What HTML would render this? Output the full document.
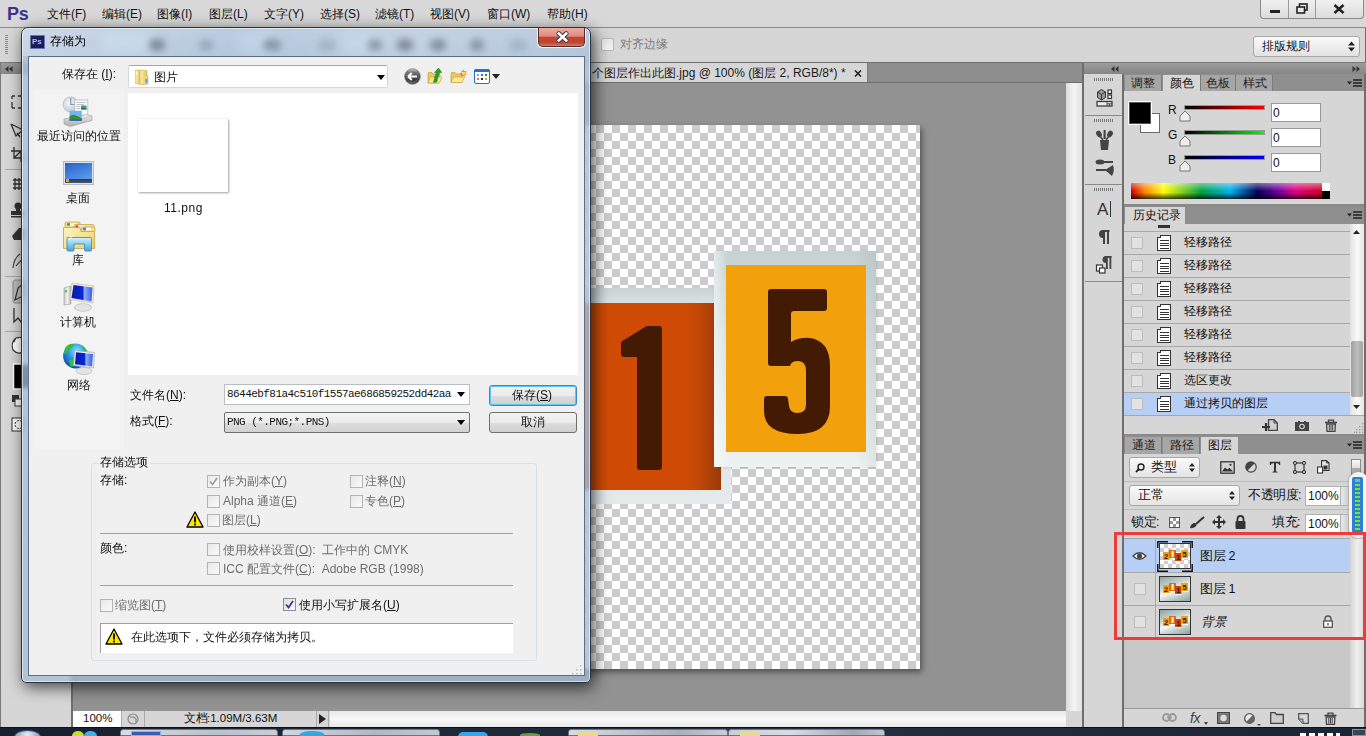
<!DOCTYPE html>
<html><head><meta charset="utf-8">
<style>
*{margin:0;padding:0;box-sizing:border-box}
html,body{width:1366px;height:736px;overflow:hidden}
body{position:relative;background:#d6d6d6;font-family:"Liberation Sans",sans-serif;font-size:12px;color:#111}
.a{position:absolute}
.t{position:absolute;white-space:nowrap;line-height:1}
.c{display:inline-block;width:1em;text-align:center}
</style></head><body>

<!-- MENU BAR -->
<div class="a" style="left:0;top:0;width:1366px;height:28px;background:#d8d8d8"></div>
<div class="t" style="left:7px;top:5px;font-size:18px;font-weight:bold;color:#3a3290;letter-spacing:-0.3px">Ps</div>
<div class="t" style="left:47px;top:8px;font-size:12px"><span class="c">文</span><span class="c">件</span>(F)</div>
<div class="t" style="left:102px;top:8px;font-size:12px"><span class="c">编</span><span class="c">辑</span>(E)</div>
<div class="t" style="left:157px;top:8px;font-size:12px"><span class="c">图</span><span class="c">像</span>(I)</div>
<div class="t" style="left:209px;top:8px;font-size:12px"><span class="c">图</span><span class="c">层</span>(L)</div>
<div class="t" style="left:264px;top:8px;font-size:12px"><span class="c">文</span><span class="c">字</span>(Y)</div>
<div class="t" style="left:320px;top:8px;font-size:12px"><span class="c">选</span><span class="c">择</span>(S)</div>
<div class="t" style="left:375px;top:8px;font-size:12px"><span class="c">滤</span><span class="c">镜</span>(T)</div>
<div class="t" style="left:430px;top:8px;font-size:12px"><span class="c">视</span><span class="c">图</span>(V)</div>
<div class="t" style="left:487px;top:8px;font-size:12px"><span class="c">窗</span><span class="c">口</span>(W)</div>
<div class="t" style="left:547px;top:8px;font-size:12px"><span class="c">帮</span><span class="c">助</span>(H)</div>

<!-- OPTIONS BAR -->
<div class="a" style="left:0;top:27px;width:1366px;height:1px;background:#8a8a8a"></div>
<div class="a" style="left:0;top:28px;width:1366px;height:34px;background:#d6d6d6"></div>
<div class="a" style="left:0;top:62px;width:1366px;height:1px;background:#7a7a7a"></div>
<div class="a" style="left:1365px;top:28px;width:1px;height:699px;background:#6e6e6e"></div>

<!-- DOC TAB BAR + CANVAS AREA -->
<div class="a" style="left:73px;top:63px;width:1009px;height:19px;background:#8e8e8e"></div>
<div class="a" style="left:73px;top:82px;width:993px;height:629px;background:#929292"></div>

<!-- STATUS BAR -->
<div class="a" style="left:73px;top:711px;width:1009px;height:16px;background:#d6d6d6"></div>

<!-- TOOLBAR LEFT -->
<div class="a" style="left:0;top:63px;width:71px;height:664px;background:#d6d6d6"></div>
<div class="a" style="left:71px;top:63px;width:2px;height:664px;background:#6e6e6e"></div>

<!-- RIGHT: separators and icon column -->
<div class="a" style="left:1082px;top:63px;width:2px;height:664px;background:#6e6e6e"></div>
<div class="a" style="left:1084px;top:63px;width:282px;height:11px;background:#8f8f8f"></div>
<div class="a" style="left:1084px;top:74px;width:38px;height:653px;background:#d6d6d6"></div>
<div class="a" style="left:1122px;top:74px;width:2px;height:653px;background:#6e6e6e"></div>
<div class="a" style="left:1124px;top:74px;width:242px;height:653px;background:#d6d6d6"></div>

<!-- TASKBAR -->
<div class="a" style="left:0;top:727px;width:1366px;height:9px;background:linear-gradient(90deg,#172030,#1f2a3a 40%,#243040 60%,#1a2434)"></div>
<div class="a" style="left:0;top:727px;width:1366px;height:1px;background:#0c1018"></div>
<div class="a" style="left:14px;top:730px;width:27px;height:14px;border-radius:50%;background:radial-gradient(ellipse at 50% 30%,#e8eef4,#8aa0b8 70%);border:1px solid #3a5a8a"></div>
<div class="a" style="left:72px;top:731px;width:12px;height:10px;border-radius:50%;background:#c8e020"></div>
<div class="a" style="left:84px;top:731px;width:13px;height:10px;border-radius:50%;background:#40b0f0"></div>
<div class="a" style="left:120px;top:729px;width:158px;height:7px;border-radius:3px 3px 0 0;background:linear-gradient(90deg,#d8dce2,#b8c0ca 60%,#c8ced6);border:1px solid #6a7688"></div>
<div class="a" style="left:131px;top:731px;width:30px;height:5px;background:#3a5ab8;border:1px solid #8ab0f0"></div>
<div class="a" style="left:282px;top:729px;width:158px;height:7px;border-radius:3px 3px 0 0;background:linear-gradient(90deg,#d0d6de,#b0b8c4 60%,#c0c8d2);border:1px solid #6a7688"></div>
<div class="a" style="left:300px;top:731px;width:24px;height:6px;border-radius:50% 50% 0 0;background:#30a8e8"></div>
<div class="a" style="left:458px;top:732px;width:30px;height:5px;border-radius:6px 6px 0 0;background:#30a8f0"></div>
<div class="a" style="left:520px;top:733px;width:20px;height:4px;border-radius:50% 50% 0 0;background:#6aa030"></div>
<div class="a" style="left:568px;top:729px;width:160px;height:7px;border-radius:3px 3px 0 0;background:linear-gradient(90deg,#d8dce2,#a8b0bc 70%,#c8ced6);border:1px solid #6a7688"></div>
<div class="a" style="left:578px;top:731px;width:20px;height:5px;background:#e8d890"></div>
<div class="a" style="left:728px;top:729px;width:157px;height:7px;border-radius:3px 3px 0 0;background:linear-gradient(90deg,#c8ced6,#d8dce2 40%,#a0a8b4 80%,#c0c6ce);border:1px solid #6a7688"></div>
<div class="a" style="left:740px;top:731px;width:20px;height:5px;background:#e8d890"></div>
<div class="a" style="left:1300px;top:733px;width:40px;height:3px;background:repeating-linear-gradient(90deg,#fff 0 6px,transparent 6px 9px)"></div>
<div class="a" style="left:1352px;top:729px;width:14px;height:7px;background:#3a4452;border:1px solid #8a94a0"></div>


<!-- ===== PS MAIN ===== -->
<!-- window controls -->
<div class="a" style="left:1260px;top:0;width:104px;height:19px;border:1px solid #8a8a8a;border-top:none;border-radius:0 0 4px 4px;background:linear-gradient(180deg,#f0f0f0,#dcdcdc)"></div>
<div class="a" style="left:1288px;top:0;width:1px;height:18px;background:#9a9a9a"></div>
<div class="a" style="left:1315px;top:0;width:1px;height:18px;background:#9a9a9a"></div>
<div class="a" style="left:1270px;top:10px;width:10px;height:3px;background:#222"></div>
<svg class="a" style="left:1296px;top:3px" width="12" height="11" viewBox="0 0 12 11"><rect x="3.5" y="1" width="7.5" height="6" fill="none" stroke="#222" stroke-width="1.6"/><rect x="1" y="4" width="7.5" height="6" fill="#e8e8e8" stroke="#222" stroke-width="1.6"/></svg>
<svg class="a" style="left:1333px;top:4px" width="12" height="10" viewBox="0 0 12 10"><path d="M1.5 1 L10.5 9 M10.5 1 L1.5 9" stroke="#222" stroke-width="2.6"/></svg>

<!-- options bar items -->
<div class="a" style="left:5px;top:35px;width:3px;height:20px;background:repeating-linear-gradient(180deg,#8a8a8a 0 1px,transparent 1px 2px)"></div>
<div class="a" style="left:601px;top:38px;width:13px;height:13px;border:1px solid #b8b8b8;border-radius:2px;background:linear-gradient(180deg,#e6e6e6,#f4f4f4)"></div>
<div class="t" style="left:620px;top:38px;font-size:12px;color:#7a7a7a"><span class="c">对</span><span class="c">齐</span><span class="c">边</span><span class="c">缘</span></div>
<div class="a" style="left:1253px;top:36px;width:107px;height:21px;border:1px solid #a8a8a8;border-radius:3px;background:linear-gradient(180deg,#fafafa,#e2e2e2)"></div>
<div class="t" style="left:1262px;top:40px;font-size:12px"><span class="c">排</span><span class="c">版</span><span class="c">规</span><span class="c">则</span></div>
<svg class="a" style="left:1348px;top:41px" width="7" height="11" viewBox="0 0 7 11"><path d="M0 4.5 L3.5 0.5 L7 4.5Z M0 6.5 L3.5 10.5 L7 6.5Z" fill="#222"/></svg>

<!-- toolbar "<<" header -->
<div class="a" style="left:0;top:63px;width:71px;height:11px;background:linear-gradient(180deg,#9a9a9a,#858585)"></div>
<svg class="a" style="left:5px;top:66px" width="8" height="6" viewBox="0 0 8 6"><path d="M3.5 0 L0 3 L3.5 6Z M7.5 0 L4 3 L7.5 6Z" fill="#333"/></svg>
<div class="a" style="left:0;top:63px;width:1px;height:664px;background:#7a7a7a"></div>

<!-- toolbar icons (partially hidden) -->
<svg class="a" style="left:10px;top:95px" width="24" height="340" viewBox="0 95 24 340">
<g fill="none" stroke="#333" stroke-width="1.3">
<path d="M2 96 H5 M8 96 H11 M2 108 H5 M8 108 H11 M2 96 V99 M2 102 V105 M2 108 V105" stroke-dasharray="none"/>
<path d="M1 124 L13 130 M1 124 L6 136 L13 130 M7 133 L10 137"/>
<path d="M4 147 V158 H14 M1 151 H11 V162 M4 158 L11 151"/>
<path d="M3 180 H12 M3 184 H12 M3 188 H12 M5 178 V190 M9 178 V190"/>
</g>
<g fill="#333">
<circle cx="8" cy="206" r="3.5"/><rect x="6" y="207" width="4" height="5"/><rect x="1" y="211" width="13" height="4"/><rect x="1" y="216" width="13" height="1.5"/>
<path d="M2 236 L9 228 L14 228 L14 240 L4 240Z"/>
</g>
<g fill="none" stroke="#444" stroke-width="1.2"><path d="M3 268 Q4 258 10 254 M6 266 Q9 262 13 259"/></g>
<rect x="3" y="280" width="12" height="23" rx="2" fill="#bdbdbd" stroke="#8a8a8a"/>
<path d="M5 300 L8 288 L13 284 L13 296 Z" fill="none" stroke="#333" stroke-width="1.2"/>
<path d="M4 308 V322 L8 318 L12 323" fill="none" stroke="#333" stroke-width="1.3"/>
<path d="M3 350 Q1 344 4 340 V342 Q6 336 8 338 Q10 336 12 339 V352 Q8 355 3 350Z" fill="#fff" stroke="#333" stroke-width="1.1"/>
<rect x="3.5" y="364" width="18" height="25" fill="#000" stroke="#fff" stroke-width="1.5"/>
<rect x="2" y="395" width="7" height="7" fill="#333"/><rect x="5" y="399" width="7" height="7" fill="#fff" stroke="#333"/>
<rect x="2" y="418" width="12" height="13" fill="#fff" stroke="#333"/><circle cx="9" cy="424.5" r="4" fill="none" stroke="#333" stroke-dasharray="2 1.2"/>
</svg>
<div class="a" style="left:5px;top:169px;width:17px;height:1px;background:#a8a8a8"></div>
<div class="a" style="left:5px;top:276px;width:17px;height:1px;background:#a8a8a8"></div>
<div class="a" style="left:5px;top:331px;width:17px;height:1px;background:#a8a8a8"></div>

<!-- doc tab -->
<div class="a" style="left:73px;top:62px;width:1009px;height:1px;background:#6e6e6e"></div>
<div class="a" style="left:73px;top:63px;width:795px;height:19px;background:#d6d6d6;border-right:1px solid #7a7a7a"></div>
<div class="a" style="left:73px;top:82px;width:1009px;height:1px;background:#6e6e6e"></div>
<div class="t" style="left:592px;top:67px;font-size:12px;color:#1a1a1a"><span class="c">个</span><span class="c">图</span><span class="c">层</span><span class="c">作</span><span class="c">出</span><span class="c">此</span><span class="c">图</span>.jpg @ 100% (<span class="c">图</span><span class="c">层</span> 2, RGB/8*) *</div>
<svg class="a" style="left:854px;top:70px" width="8" height="7" viewBox="0 0 8 7"><path d="M1 .5 L7 6.5 M7 .5 L1 6.5" stroke="#222" stroke-width="1.6"/></svg>

<!-- doc right scrollbar -->
<div class="a" style="left:1066px;top:83px;width:16px;height:628px;background:linear-gradient(90deg,#dcdcdc,#f4f4f4 50%,#e2e2e2)"></div>

<!-- canvas -->
<div class="a" style="left:220px;top:125px;width:700px;height:544px;background:conic-gradient(#cccccc 90deg,#ffffff 90deg 180deg,#cccccc 180deg 270deg,#ffffff 270deg) 0 0/16px 16px;box-shadow:2px 3px 6px rgba(0,0,0,.45)"></div>
<!-- card 1 -->
<div class="a" style="left:560px;top:288px;width:171px;height:216px;background:linear-gradient(180deg,#c9d3d3 0,#d9e1e1 15px,#e4eaea 100%)"></div>
<div class="a" style="left:570px;top:303px;width:151px;height:187px;background:linear-gradient(90deg,#cf4b05 0,#cf4b05 75%,#c24806 85%,#9a3a0a 100%)"></div>
<svg class="a" style="left:600px;top:300px" width="80" height="180" viewBox="600 300 80 180"><path d="M647,326 L659,326 Q662,326 662,329 L662,467 Q662,470 659,470 L640,470 Q637,470 637,467 L637,357 L624,357 Q621,357 621,354 L621,344 Q621,341 624,340 L645,327 Z" fill="#431b04"/></svg>
<!-- card 2 -->
<div class="a" style="left:714px;top:251px;width:162px;height:216px;background:linear-gradient(90deg,rgba(255,255,255,.55) 0,rgba(255,255,255,0) 14px,rgba(0,0,0,0) 140px,rgba(60,80,80,.08) 100%),linear-gradient(180deg,#c6d1d1 0,#d8e0e0 40%,#eef2f2 100%);box-shadow:1px 1px 3px rgba(0,0,0,.12)"></div>
<div class="a" style="left:726px;top:265px;width:140px;height:187px;background:#f2a00b"></div>
<svg class="a" style="left:760px;top:281px" width="80" height="160" viewBox="760 280 80 160"><path d="M771,288 L824,288 Q827,288 827,291 L827,307 Q827,310 824,310 L794,310 Q791,310 791,313 L791,341 Q800,336 810,337 Q830,340 830,365 L830,405 Q830,433 798,433 Q764,433 764,410 L764,398 Q764,395 767,395 L785,395 Q788,395 788,398 L789,405 Q790,412 797,412 Q806,412 806,404 L806,370 Q806,360 798,360 Q791,360 790,365 L771,365 Q768,365 768,362 L768,291 Q768,288 771,288 Z" fill="#431b04"/></svg>

<!-- status bar -->
<div class="a" style="left:73px;top:711px;width:48px;height:16px;background:#fff"></div>
<div class="t" style="left:83px;top:713px;font-size:11.5px">100%</div>
<div class="a" style="left:121px;top:711px;width:24px;height:16px;background:#d6d6d6;border-left:1px solid #aaa;border-right:1px solid #aaa"></div>
<svg class="a" style="left:127px;top:713px" width="12" height="12" viewBox="0 0 12 12"><circle cx="6" cy="6" r="5" fill="none" stroke="#888" stroke-width="1.2"/><path d="M3 4 H7 L9 6 V9" stroke="#888" fill="none" stroke-width="1.2"/></svg>
<div class="t" style="left:184px;top:713px;font-size:11.5px"><span class="c">文</span><span class="c">档</span>:1.09M/3.63M</div>
<div class="a" style="left:316px;top:711px;width:13px;height:16px;border-left:1px solid #aaa;border-right:1px solid #aaa"></div>
<svg class="a" style="left:319px;top:714px" width="7" height="10"><path d="M0 0 L7 5 L0 10Z" fill="#222"/></svg>
<div class="a" style="left:330px;top:711px;width:736px;height:16px;background:linear-gradient(180deg,#e8e8e8,#f8f8f8 50%,#e8e8e8)"></div>

<!-- ===== RIGHT PANELS ===== -->
<!-- header bar right -->
<div class="a" style="left:1084px;top:63px;width:282px;height:11px;background:linear-gradient(180deg,#9c9c9c,#868686)"></div>
<svg class="a" style="left:1111px;top:66px" width="8" height="6" viewBox="0 0 8 6"><path d="M3.5 0 L0 3 L3.5 6Z M7.5 0 L4 3 L7.5 6Z" fill="#333"/></svg>
<svg class="a" style="left:1352px;top:66px" width="8" height="6" viewBox="0 0 8 6"><path d="M.5 0 L4 3 L.5 6Z M4.5 0 L8 3 L4.5 6Z" fill="#333"/></svg>
<div class="a" style="left:1364px;top:74px;width:2px;height:653px;background:#6e6e6e"></div>

<!-- icon column -->
<div class="a" style="left:1085px;top:115px;width:37px;height:1px;background:#8a8a8a"></div>
<div class="a" style="left:1085px;top:184px;width:37px;height:1px;background:#8a8a8a"></div>
<div class="a" style="left:1085px;top:281px;width:37px;height:1px;background:#8a8a8a"></div>
<div class="a" style="left:1094px;top:78px;width:20px;height:3px;background:repeating-linear-gradient(90deg,#7a7a7a 0 1px,transparent 1px 2px)"></div>
<div class="a" style="left:1094px;top:119px;width:20px;height:3px;background:repeating-linear-gradient(90deg,#7a7a7a 0 1px,transparent 1px 2px)"></div>
<div class="a" style="left:1094px;top:188px;width:20px;height:3px;background:repeating-linear-gradient(90deg,#7a7a7a 0 1px,transparent 1px 2px)"></div>
<svg class="a" style="left:1096px;top:88px" width="17" height="19" viewBox="0 0 17 19"><path d="M1.5 4 L5.5 1.5 L9.5 4 V9.5 L5.5 12 L1.5 9.5Z" fill="#9a9a9a" stroke="#333" stroke-width="1"/><path d="M1.5 4 L5.5 6.5 L9.5 4 M5.5 6.5 V12" stroke="#333" stroke-width="1" fill="none"/><rect x="12" y="2" width="3.5" height="3.5" fill="#fff" stroke="#333" stroke-width="1.2"/><rect x="12" y="7" width="3.5" height="3.5" fill="#fff" stroke="#333" stroke-width="1.2"/><rect x="1" y="13.5" width="15" height="4.5" fill="#e8e8e8" stroke="#333" stroke-width="1.2"/><path d="M11 13.5 V18 M11 15.8 H16 M13.5 15.8 V18" stroke="#333" stroke-width=".8"/></svg>
<svg class="a" style="left:1095px;top:129px" width="20" height="22" viewBox="0 0 20 22"><g fill="#444"><path d="M5 11 H14 L13 21 H6Z"/><ellipse cx="4" cy="5" rx="2.6" ry="3.5" transform="rotate(-30 4 5)"/><ellipse cx="15" cy="5" rx="2.6" ry="3.5" transform="rotate(30 15 5)"/><rect x="8.5" y="1" width="2.2" height="9"/></g><path d="M5 7 L8 11 M14 7 L11 11" stroke="#444" stroke-width="1.5"/></svg>
<svg class="a" style="left:1095px;top:158px" width="20" height="20" viewBox="0 0 20 20"><g fill="#444"><ellipse cx="5" cy="4" rx="4.5" ry="2.5"/><rect x="8" y="3" width="10" height="2"/><rect x="1" y="11" width="10" height="2"/><path d="M10 12 L18 7 Q20 13 17 18Z"/></g></svg>
<div class="t" style="left:1097px;top:201px;font-size:17px;color:#333">A</div>
<div class="a" style="left:1110px;top:201px;width:1.3px;height:16px;background:#333"></div>
<svg class="a" style="left:1097px;top:229px" width="13" height="15" viewBox="0 0 13 15"><path d="M6 1 A4 4 0 0 0 6 9Z" fill="#444"/><rect x="5.5" y="1" width="7" height="2" fill="#444"/><rect x="6" y="1" width="2" height="14" fill="#444"/><rect x="10" y="1" width="2" height="14" fill="#444"/></svg>
<svg class="a" style="left:1095px;top:255px" width="18" height="19" viewBox="0 0 18 19"><path d="M11 1 A3.5 3.5 0 0 0 11 8Z" fill="#444"/><rect x="10.5" y="1" width="6" height="1.8" fill="#444"/><rect x="11" y="1" width="1.8" height="13" fill="#444"/><rect x="14.5" y="1" width="1.8" height="13" fill="#444"/><rect x="1.5" y="10" width="6" height="6" fill="#fff" stroke="#333" stroke-width="1.2"/><rect x="4.5" y="13" width="5.5" height="5" fill="#fff" stroke="#333" stroke-width="1.2"/></svg>

<!-- ---- COLOR PANEL ---- -->
<div class="a" style="left:1124px;top:74px;width:240px;height:17px;background:#8f8f8f"></div>
<div class="a" style="left:1125px;top:75px;width:37px;height:16px;background:#a6a6a6;border-right:1px solid #7a7a7a"></div>
<div class="t" style="left:1131px;top:77px;font-size:12px;color:#222"><span class="c">调</span><span class="c">整</span></div>
<div class="a" style="left:1163px;top:75px;width:37px;height:17px;background:#d6d6d6"></div>
<div class="t" style="left:1170px;top:77px;font-size:12px;color:#111"><span class="c">颜</span><span class="c">色</span></div>
<div class="a" style="left:1200px;top:75px;width:36px;height:16px;background:#a6a6a6;border-right:1px solid #7a7a7a;border-left:1px solid #7a7a7a"></div>
<div class="t" style="left:1206px;top:77px;font-size:12px;color:#222"><span class="c">色</span><span class="c">板</span></div>
<div class="a" style="left:1236px;top:75px;width:37px;height:16px;background:#a6a6a6;border-right:1px solid #7a7a7a"></div>
<div class="t" style="left:1243px;top:77px;font-size:12px;color:#222"><span class="c">样</span><span class="c">式</span></div>
<svg class="a" style="left:1347px;top:79px" width="15" height="9" viewBox="0 0 15 9"><path d="M0 2.5 H5 L2.5 5.5Z" fill="#222"/><path d="M6 1 H15 M6 4 H15 M6 7 H15" stroke="#222" stroke-width="1.3"/></svg>
<!-- swatches -->
<div class="a" style="left:1140px;top:113px;width:20px;height:20px;background:#fff;border:1px solid #6a6a6a"></div>
<div class="a" style="left:1129px;top:102px;width:22px;height:22px;background:#000;border:1px solid #555;box-shadow:0 0 0 1px #fff"></div>
<!-- sliders -->
<div class="t" style="left:1168px;top:104px;font-size:12px">R</div>
<div class="t" style="left:1168px;top:129px;font-size:12px">G</div>
<div class="t" style="left:1168px;top:154px;font-size:12px">B</div>
<div class="a" style="left:1184px;top:105px;width:81px;height:5px;background:linear-gradient(90deg,#000,#ff0000);border:1px solid #9a9a9a"></div>
<div class="a" style="left:1184px;top:130px;width:81px;height:5px;background:linear-gradient(90deg,#000,#00ff00);border:1px solid #9a9a9a"></div>
<div class="a" style="left:1184px;top:155px;width:81px;height:5px;background:linear-gradient(90deg,#000,#0000ff);border:1px solid #9a9a9a"></div>
<svg class="a" style="left:1179px;top:110px" width="12" height="12" viewBox="0 0 12 12"><path d="M6 1 L11 6 V11 H1 V6Z" fill="#eee" stroke="#777"/></svg>
<svg class="a" style="left:1179px;top:135px" width="12" height="12" viewBox="0 0 12 12"><path d="M6 1 L11 6 V11 H1 V6Z" fill="#eee" stroke="#777"/></svg>
<svg class="a" style="left:1179px;top:160px" width="12" height="12" viewBox="0 0 12 12"><path d="M6 1 L11 6 V11 H1 V6Z" fill="#eee" stroke="#777"/></svg>
<div class="a" style="left:1271px;top:103px;width:50px;height:19px;background:#fff;border:1px solid #9a9a9a"></div>
<div class="a" style="left:1271px;top:128px;width:50px;height:19px;background:#fff;border:1px solid #9a9a9a"></div>
<div class="a" style="left:1271px;top:153px;width:50px;height:19px;background:#fff;border:1px solid #9a9a9a"></div>
<div class="t" style="left:1273px;top:107px;font-size:12px">0</div>
<div class="t" style="left:1273px;top:132px;font-size:12px">0</div>
<div class="t" style="left:1273px;top:157px;font-size:12px">0</div>
<!-- spectrum -->
<div class="a" style="left:1131px;top:183px;width:191px;height:16px;background:linear-gradient(180deg,rgba(255,255,255,.0) 0,rgba(255,255,255,0) 40%,rgba(0,0,0,0) 60%,rgba(0,0,0,.75) 100%),linear-gradient(90deg,#c80000 0,#ff8000 7%,#ffff00 17%,#00a040 37%,#00b0f0 52%,#00005a 66%,#7a00a0 78%,#e00080 86%,#d00020 100%)"></div>
<div class="a" style="left:1131px;top:183px;width:191px;height:8px;background:linear-gradient(180deg,rgba(255,255,255,.45),rgba(255,255,255,0))"></div>
<div class="a" style="left:1322px;top:183px;width:8px;height:8px;background:#fff"></div>
<div class="a" style="left:1322px;top:191px;width:8px;height:8px;background:#000"></div>
<!-- panel bottom border -->
<div class="a" style="left:1124px;top:204px;width:240px;height:3px;background:#8a8a8a"></div>

<!-- ---- HISTORY PANEL ---- -->
<div class="a" style="left:1124px;top:207px;width:240px;height:17px;background:#8f8f8f"></div>
<div class="a" style="left:1125px;top:207px;width:60px;height:17px;background:#d6d6d6"></div>
<div class="t" style="left:1133px;top:209px;font-size:12px;color:#111"><span class="c">历</span><span class="c">史</span><span class="c">记</span><span class="c">录</span></div>
<svg class="a" style="left:1347px;top:211px" width="15" height="9" viewBox="0 0 15 9"><path d="M0 2.5 H5 L2.5 5.5Z" fill="#222"/><path d="M6 1 H15 M6 4 H15 M6 7 H15" stroke="#222" stroke-width="1.3"/></svg>
<div class="a" style="left:1124px;top:224px;width:226px;height:191px;background:#d6d6d6"></div>
<div class="a" style="left:1158px;top:225px;width:12px;height:3px;background:#333"></div>
<!-- scrollbar -->
<div class="a" style="left:1350px;top:224px;width:14px;height:191px;background:linear-gradient(90deg,#e0e0e0,#fafafa 50%,#e6e6e6)"></div>
<svg class="a" style="left:1353px;top:230px" width="7" height="4"><path d="M0 4 L3.5 0 L7 4Z" fill="#222"/></svg>
<svg class="a" style="left:1353px;top:405px" width="7" height="4"><path d="M0 0 L3.5 4 L7 0Z" fill="#222"/></svg>
<div class="a" style="left:1351px;top:341px;width:12px;height:56px;border-radius:2px;background:linear-gradient(90deg,#9e9e9e,#bdbdbd 50%,#a4a4a4)"></div>
<div class="a" style="left:1124px;top:231px;width:226px;height:23px;background:#d6d6d6;border-top:1px solid #a8a8a8"></div>
<div class="a" style="left:1131px;top:237px;width:12px;height:12px;border:1px solid #bcbcbc;background:#e2e2e2"></div>
<svg class="a" style="left:1157px;top:235px" width="15" height="16" viewBox="0 0 15 16" shape-rendering="crispEdges"><path d="M0 2 H3 V0 H14 V16 H0Z" fill="#333"/><path d="M1 3 H4 V1 H13 V15 H1Z" fill="#fff"/><path d="M3 5 H12 V6 H3Z M3 7.5 H12 V8.5 H3Z M3 10 H12 V11 H3Z M3 12.5 H12 V13.5 H3Z" fill="#333"/></svg>
<div class="t" style="left:1184px;top:236px;font-size:12px;color:#111"><span class="c">轻</span><span class="c">移</span><span class="c">路</span><span class="c">径</span></div>
<div class="a" style="left:1124px;top:254px;width:226px;height:23px;background:#d6d6d6;border-top:1px solid #a8a8a8"></div>
<div class="a" style="left:1131px;top:260px;width:12px;height:12px;border:1px solid #bcbcbc;background:#e2e2e2"></div>
<svg class="a" style="left:1157px;top:258px" width="15" height="16" viewBox="0 0 15 16" shape-rendering="crispEdges"><path d="M0 2 H3 V0 H14 V16 H0Z" fill="#333"/><path d="M1 3 H4 V1 H13 V15 H1Z" fill="#fff"/><path d="M3 5 H12 V6 H3Z M3 7.5 H12 V8.5 H3Z M3 10 H12 V11 H3Z M3 12.5 H12 V13.5 H3Z" fill="#333"/></svg>
<div class="t" style="left:1184px;top:259px;font-size:12px;color:#111"><span class="c">轻</span><span class="c">移</span><span class="c">路</span><span class="c">径</span></div>
<div class="a" style="left:1124px;top:277px;width:226px;height:23px;background:#d6d6d6;border-top:1px solid #a8a8a8"></div>
<div class="a" style="left:1131px;top:283px;width:12px;height:12px;border:1px solid #bcbcbc;background:#e2e2e2"></div>
<svg class="a" style="left:1157px;top:281px" width="15" height="16" viewBox="0 0 15 16" shape-rendering="crispEdges"><path d="M0 2 H3 V0 H14 V16 H0Z" fill="#333"/><path d="M1 3 H4 V1 H13 V15 H1Z" fill="#fff"/><path d="M3 5 H12 V6 H3Z M3 7.5 H12 V8.5 H3Z M3 10 H12 V11 H3Z M3 12.5 H12 V13.5 H3Z" fill="#333"/></svg>
<div class="t" style="left:1184px;top:282px;font-size:12px;color:#111"><span class="c">轻</span><span class="c">移</span><span class="c">路</span><span class="c">径</span></div>
<div class="a" style="left:1124px;top:300px;width:226px;height:23px;background:#d6d6d6;border-top:1px solid #a8a8a8"></div>
<div class="a" style="left:1131px;top:306px;width:12px;height:12px;border:1px solid #bcbcbc;background:#e2e2e2"></div>
<svg class="a" style="left:1157px;top:304px" width="15" height="16" viewBox="0 0 15 16" shape-rendering="crispEdges"><path d="M0 2 H3 V0 H14 V16 H0Z" fill="#333"/><path d="M1 3 H4 V1 H13 V15 H1Z" fill="#fff"/><path d="M3 5 H12 V6 H3Z M3 7.5 H12 V8.5 H3Z M3 10 H12 V11 H3Z M3 12.5 H12 V13.5 H3Z" fill="#333"/></svg>
<div class="t" style="left:1184px;top:305px;font-size:12px;color:#111"><span class="c">轻</span><span class="c">移</span><span class="c">路</span><span class="c">径</span></div>
<div class="a" style="left:1124px;top:323px;width:226px;height:23px;background:#d6d6d6;border-top:1px solid #a8a8a8"></div>
<div class="a" style="left:1131px;top:329px;width:12px;height:12px;border:1px solid #bcbcbc;background:#e2e2e2"></div>
<svg class="a" style="left:1157px;top:327px" width="15" height="16" viewBox="0 0 15 16" shape-rendering="crispEdges"><path d="M0 2 H3 V0 H14 V16 H0Z" fill="#333"/><path d="M1 3 H4 V1 H13 V15 H1Z" fill="#fff"/><path d="M3 5 H12 V6 H3Z M3 7.5 H12 V8.5 H3Z M3 10 H12 V11 H3Z M3 12.5 H12 V13.5 H3Z" fill="#333"/></svg>
<div class="t" style="left:1184px;top:328px;font-size:12px;color:#111"><span class="c">轻</span><span class="c">移</span><span class="c">路</span><span class="c">径</span></div>
<div class="a" style="left:1124px;top:346px;width:226px;height:23px;background:#d6d6d6;border-top:1px solid #a8a8a8"></div>
<div class="a" style="left:1131px;top:352px;width:12px;height:12px;border:1px solid #bcbcbc;background:#e2e2e2"></div>
<svg class="a" style="left:1157px;top:350px" width="15" height="16" viewBox="0 0 15 16" shape-rendering="crispEdges"><path d="M0 2 H3 V0 H14 V16 H0Z" fill="#333"/><path d="M1 3 H4 V1 H13 V15 H1Z" fill="#fff"/><path d="M3 5 H12 V6 H3Z M3 7.5 H12 V8.5 H3Z M3 10 H12 V11 H3Z M3 12.5 H12 V13.5 H3Z" fill="#333"/></svg>
<div class="t" style="left:1184px;top:351px;font-size:12px;color:#111"><span class="c">轻</span><span class="c">移</span><span class="c">路</span><span class="c">径</span></div>
<div class="a" style="left:1124px;top:369px;width:226px;height:23px;background:#d6d6d6;border-top:1px solid #a8a8a8"></div>
<div class="a" style="left:1131px;top:375px;width:12px;height:12px;border:1px solid #bcbcbc;background:#e2e2e2"></div>
<svg class="a" style="left:1157px;top:373px" width="15" height="16" viewBox="0 0 15 16" shape-rendering="crispEdges"><path d="M0 2 H3 V0 H14 V16 H0Z" fill="#333"/><path d="M1 3 H4 V1 H13 V15 H1Z" fill="#fff"/><path d="M3 5 H12 V6 H3Z M3 7.5 H12 V8.5 H3Z M3 10 H12 V11 H3Z M3 12.5 H12 V13.5 H3Z" fill="#333"/></svg>
<div class="t" style="left:1184px;top:374px;font-size:12px;color:#111"><span class="c">选</span><span class="c">区</span><span class="c">更</span><span class="c">改</span></div>
<div class="a" style="left:1124px;top:392px;width:226px;height:23px;background:#b7cef5;border-top:1px solid #a8a8a8"></div>
<div class="a" style="left:1131px;top:398px;width:12px;height:12px;border:1px solid #bcbcbc;background:#e2e2e2"></div>
<svg class="a" style="left:1157px;top:396px" width="15" height="16" viewBox="0 0 15 16" shape-rendering="crispEdges"><path d="M0 2 H3 V0 H14 V16 H0Z" fill="#333"/><path d="M1 3 H4 V1 H13 V15 H1Z" fill="#fff"/><path d="M3 5 H12 V6 H3Z M3 7.5 H12 V8.5 H3Z M3 10 H12 V11 H3Z M3 12.5 H12 V13.5 H3Z" fill="#333"/></svg>
<div class="t" style="left:1184px;top:397px;font-size:12px;color:#111"><span class="c">通</span><span class="c">过</span><span class="c">拷</span><span class="c">贝</span><span class="c">的</span><span class="c">图</span><span class="c">层</span></div>

<!-- history footer -->
<div class="a" style="left:1124px;top:415px;width:240px;height:19px;background:#d6d6d6;border-top:1px solid #a8a8a8"></div>
<svg class="a" style="left:1262px;top:419px" width="16" height="13" viewBox="0 0 16 13"><path d="M6.5 .7 H12 L15.3 4 V11.3 H6.5Z" fill="#d0d0d0" stroke="#444" stroke-width="1.3"/><path d="M12 .7 V4 H15.3" fill="none" stroke="#444" stroke-width="1"/><path d="M0 8 H8 M4 4 V12" stroke="#333" stroke-width="2.2"/></svg>
<svg class="a" style="left:1295px;top:420px" width="14" height="11" viewBox="0 0 14 11"><path d="M0 2 H3 V1 H5 V2 H9 V1 H11 V2 H14 V11 H0Z" fill="#444"/><circle cx="7" cy="6.5" r="2.8" fill="#ddd"/><circle cx="7" cy="6.5" r="1.7" fill="#444"/></svg>
<svg class="a" style="left:1325px;top:419px" width="12" height="13" viewBox="0 0 12 13"><path d="M3.5 3 V1.2 H8.5 V3" stroke="#444" stroke-width="1.3" fill="none"/><path d="M0 3.5 H12" stroke="#444" stroke-width="1.6"/><path d="M1.6 5 H10.4 L10 12.4 H2Z" fill="none" stroke="#444" stroke-width="1.3"/><path d="M4.3 6 V11.5 M6 6 V11.5 M7.7 6 V11.5" stroke="#444" stroke-width="1"/></svg>
<svg class="a" style="left:1354px;top:423px" width="10" height="10" viewBox="0 0 10 10"><g fill="#999"><rect x="8" y="0" width="1.3" height="1.3"/><rect x="8" y="3" width="1.3" height="1.3"/><rect x="5" y="3" width="1.3" height="1.3"/><rect x="8" y="6" width="1.3" height="1.3"/><rect x="5" y="6" width="1.3" height="1.3"/><rect x="2" y="6" width="1.3" height="1.3"/><rect x="8" y="8.7" width="1.3" height="1.3"/><rect x="5" y="8.7" width="1.3" height="1.3"/><rect x="2" y="8.7" width="1.3" height="1.3"/><rect x="0" y="8.7" width="1.3" height="1.3"/></g></svg>
<div class="a" style="left:1124px;top:434px;width:240px;height:2px;background:#8a8a8a"></div>

<!-- ---- LAYERS PANEL ---- -->
<div class="a" style="left:1124px;top:436px;width:240px;height:18px;background:#8f8f8f"></div>
<div class="a" style="left:1125px;top:437px;width:37px;height:17px;background:#a6a6a6;border-right:1px solid #7a7a7a"></div>
<div class="t" style="left:1132px;top:439px;font-size:12px;color:#222"><span class="c">通</span><span class="c">道</span></div>
<div class="a" style="left:1163px;top:437px;width:37px;height:17px;background:#a6a6a6;border-right:1px solid #7a7a7a"></div>
<div class="t" style="left:1170px;top:439px;font-size:12px;color:#222"><span class="c">路</span><span class="c">径</span></div>
<div class="a" style="left:1201px;top:437px;width:37px;height:17px;background:#d6d6d6"></div>
<div class="t" style="left:1208px;top:439px;font-size:12px;color:#111"><span class="c">图</span><span class="c">层</span></div>
<svg class="a" style="left:1347px;top:441px" width="15" height="9" viewBox="0 0 15 9"><path d="M0 2.5 H5 L2.5 5.5Z" fill="#222"/><path d="M6 1 H15 M6 4 H15 M6 7 H15" stroke="#222" stroke-width="1.3"/></svg>
<!-- filter row -->
<div class="a" style="left:1129px;top:457px;width:71px;height:21px;border:1px solid #a8a8a8;border-radius:3px;background:linear-gradient(180deg,#fafafa,#e4e4e4)"></div>
<svg class="a" style="left:1135px;top:463px" width="10" height="10" viewBox="0 0 10 10"><circle cx="6" cy="4" r="3" fill="none" stroke="#222" stroke-width="1.4"/><path d="M4 6 L1 9" stroke="#222" stroke-width="1.8"/></svg>
<div class="t" style="left:1151px;top:461px;font-size:12.5px"><span class="c">类</span><span class="c">型</span></div>
<svg class="a" style="left:1189px;top:463px" width="6" height="9" viewBox="0 0 6 9"><path d="M0 3.5 L3 0 L6 3.5Z M0 5.5 L3 9 L6 5.5Z" fill="#222"/></svg>
<svg class="a" style="left:1220px;top:461px" width="15" height="13" viewBox="0 0 15 13"><rect x=".8" y=".8" width="13.4" height="11.4" fill="#d4d4d4" stroke="#333" stroke-width="1.3"/><path d="M2 10.5 L5 6.5 L7.5 8.5 L9.5 6.8 L13 10.5Z" fill="#333"/><circle cx="10.5" cy="3.8" r="1.1" fill="#333"/></svg>
<svg class="a" style="left:1245px;top:461px" width="12" height="12" viewBox="0 0 12 12"><circle cx="6" cy="6" r="5.2" fill="#d8d8d8" stroke="#444" stroke-width="1.2"/><path d="M9.7 2.3 A5.2 5.2 0 0 0 2.3 9.7Z" fill="#444"/></svg>
<svg class="a" style="left:1269px;top:461px" width="12" height="12" viewBox="0 0 12 12"><path d="M.8 .8 H11.2 V4 H10.2 Q10 2.3 8.3 2.3 H7 V10 Q7 10.8 8 10.8 H8.6 V11.5 H3.4 V10.8 H4 Q5 10.8 5 10 V2.3 H3.7 Q2 2.3 1.8 4 H.8Z" fill="#333"/></svg>
<svg class="a" style="left:1293px;top:461px" width="13" height="13" viewBox="0 0 13 13"><rect x="2" y="2" width="9" height="9" fill="none" stroke="#333" stroke-width="1.2"/><g fill="#d6d6d6" stroke="#333" stroke-width="1.1"><circle cx="2" cy="2" r="1.5"/><circle cx="11" cy="2" r="1.5"/><circle cx="2" cy="11" r="1.5"/><circle cx="11" cy="11" r="1.5"/></g></svg>
<svg class="a" style="left:1317px;top:460px" width="13" height="14" viewBox="0 0 13 14"><path d="M4.6 .6 H9.5 L12 3 V10.5 H4.6Z" fill="#e8e8e8" stroke="#333" stroke-width="1.1"/><path d="M9.5 .6 V3 H12" fill="none" stroke="#333" stroke-width=".9"/><rect x=".6" y="7" width="5" height="6" fill="#fff" stroke="#333" stroke-width="1.1"/><rect x="6.5" y="5.5" width="4" height="4" fill="#333"/></svg>
<div class="a" style="left:1124px;top:481px;width:226px;height:1px;background:#bcbcbc"></div>
<!-- blend row -->
<div class="a" style="left:1129px;top:485px;width:111px;height:21px;border:1px solid #a8a8a8;border-radius:3px;background:linear-gradient(180deg,#fafafa,#e4e4e4)"></div>
<div class="t" style="left:1138px;top:489px;font-size:12.5px"><span class="c">正</span><span class="c">常</span></div>
<svg class="a" style="left:1229px;top:491px" width="6" height="9" viewBox="0 0 6 9"><path d="M0 3.5 L3 0 L6 3.5Z M0 5.5 L3 9 L6 5.5Z" fill="#222"/></svg>
<div class="t" style="left:1248px;top:489px;font-size:12.5px"><span class="c">不</span><span class="c">透</span><span class="c">明</span><span class="c">度</span>:</div>
<div class="a" style="left:1305px;top:486px;width:36px;height:20px;background:#fff;border:1px solid #b0b0b0"></div>
<div class="t" style="left:1308px;top:490px;font-size:12px">100%</div>
<div class="a" style="left:1124px;top:509px;width:226px;height:1px;background:#bcbcbc"></div>
<!-- lock row -->
<div class="t" style="left:1131px;top:516px;font-size:12.5px"><span class="c">锁</span><span class="c">定</span>:</div>
<div class="a" style="left:1169px;top:517px;width:11px;height:11px;border:1px solid #555;background:conic-gradient(#999 90deg,#fff 90deg 180deg,#999 180deg 270deg,#fff 270deg) 0 0/6px 6px"></div>
<svg class="a" style="left:1189px;top:516px" width="16" height="13" viewBox="0 0 16 13"><path d="M15 1 L7 8" stroke="#333" stroke-width="2"/><path d="M1 12 Q2 7 6 7 Q9 9 6 11 Q4 12.5 1 12Z" fill="#333"/></svg>
<svg class="a" style="left:1212px;top:515px" width="14" height="14" viewBox="0 0 14 14"><path d="M7 0 L10 3 H8 V6 H11 V4 L14 7 L11 10 V8 H8 V11 H10 L7 14 L4 11 H6 V8 H3 V10 L0 7 L3 4 V6 H6 V3 H4Z" fill="#333"/></svg>
<svg class="a" style="left:1235px;top:515px" width="11" height="14" viewBox="0 0 11 14"><path d="M2.5 6 V4 A3 3 0 0 1 8.5 4 V6" stroke="#333" stroke-width="1.8" fill="none"/><rect x="0.5" y="6" width="10" height="8" rx="1" fill="#333"/></svg>
<div class="t" style="left:1272px;top:516px;font-size:12.5px"><span class="c">填</span><span class="c">充</span>:</div>
<div class="a" style="left:1305px;top:514px;width:36px;height:20px;background:#fff;border:1px solid #b0b0b0"></div>
<div class="t" style="left:1308px;top:518px;font-size:12px">100%</div>
<!-- meter widget -->
<div class="a" style="left:1351px;top:459px;width:10px;height:16px;border:1px solid #8a8a8a;background:linear-gradient(180deg,#fafafa 0,#e0e0e0 55%,#a8a8a8 56%,#b8b8b8 100%)"></div>
<div class="a" style="left:1349px;top:472px;width:19px;height:66px;border-radius:9px;background:#f4f4f4;box-shadow:0 0 3px rgba(0,0,0,.35)"></div>
<div class="a" style="left:1352px;top:477px;width:11px;height:56px;background:#2f7fd2;border-radius:2px"></div>
<div class="a" style="left:1355px;top:479px;width:5px;height:3px;background:#7aaee0"></div>
<div class="a" style="left:1355px;top:484px;width:5px;height:48px;background:repeating-linear-gradient(180deg,#6ee82a 0 2px,transparent 2px 4px)"></div>
<div class="a" style="left:1341px;top:486px;width:8px;height:20px;background:linear-gradient(90deg,#e8e8e8,#d0d0d0);border:1px solid #b0b0b0;border-left:none"></div>
<div class="a" style="left:1341px;top:514px;width:8px;height:20px;background:linear-gradient(90deg,#e8e8e8,#d0d0d0);border:1px solid #b0b0b0;border-left:none"></div>
<!-- layers list -->
<div class="a" style="left:1124px;top:538px;width:226px;height:1px;background:#a8a8a8"></div>
<div class="a" style="left:1124px;top:539px;width:226px;height:33px;background:#b7cef5"></div>
<div class="a" style="left:1124px;top:572px;width:226px;height:33px;background:#d6d6d6;border-top:1px solid #a8a8a8"></div>
<div class="a" style="left:1124px;top:605px;width:226px;height:33px;background:#d6d6d6;border-top:1px solid #a8a8a8;border-bottom:1px solid #a8a8a8"></div>
<div class="a" style="left:1155px;top:539px;width:1px;height:99px;background:#a8a8a8"></div>
<div class="a" style="left:1350px;top:539px;width:14px;height:169px;background:linear-gradient(90deg,#d2d2d2,#f0f0f0 50%,#dadada)"></div>
<div class="a" style="left:1124px;top:638px;width:226px;height:70px;background:#c7c7c7"></div>
<svg class="a" style="left:1132px;top:551px" width="15" height="10" viewBox="0 0 15 10"><path d="M1 5 Q7.5 -1.5 14 5 Q7.5 11.5 1 5Z" fill="#fff" stroke="#444" stroke-width="1.3"/><circle cx="7.5" cy="5" r="2.6" fill="#444"/></svg>
<div class="a" style="left:1134px;top:583px;width:12px;height:12px;border:1px solid #bcbcbc;background:#e2e2e2"></div>
<div class="a" style="left:1134px;top:616px;width:12px;height:12px;border:1px solid #bcbcbc;background:#e2e2e2"></div>
<div class="a" style="left:1159px;top:543px;width:32px;height:26px;border:1px solid #333;background:conic-gradient(#cfcfcf 90deg,#fff 90deg 180deg,#cfcfcf 180deg 270deg,#fff 270deg) 0 0/8px 8px"></div>
<svg class="a" style="left:1159px;top:543px" width="32" height="26" viewBox="0 0 32 26"><rect x="4" y="10" width="6.5" height="8" fill="#fff" opacity=".8"/><rect x="10" y="8" width="7" height="8" fill="#fff" opacity=".8"/><rect x="16" y="11" width="6.5" height="8" fill="#fff" opacity=".8"/><rect x="22" y="8" width="7" height="8" fill="#fff" opacity=".8"/><rect x="4" y="9" width="6.5" height="8" fill="#f2a00b"/><rect x="10" y="7" width="7" height="8" fill="#e8681a"/><rect x="12.5" y="8" width="2.2" height="6" fill="#f8f0b0"/><rect x="16" y="10" width="6.5" height="8" fill="#c84a08"/><rect x="22" y="7" width="7" height="8" fill="#f2a00b"/><text x="5" y="16" font-family="Liberation Sans" font-weight="bold" font-size="7.5" fill="#3a1a04">2</text><text x="17.3" y="17" font-family="Liberation Sans" font-weight="bold" font-size="7.5" fill="#3a1a04">1</text><text x="23.5" y="14" font-family="Liberation Sans" font-weight="bold" font-size="7.5" fill="#3a1a04">5</text></svg>
<div class="a" style="left:1159px;top:576px;width:32px;height:26px;border:1px solid #333;background:linear-gradient(160deg,#8fa4a2 0,#c8d4d2 35%,#f4f6f6 55%,#b4c4c2 80%,#8fa2a0 100%)"></div>
<svg class="a" style="left:1159px;top:576px" width="32" height="26" viewBox="0 0 32 26"><rect x="4" y="10" width="6.5" height="8" fill="#fff" opacity=".8"/><rect x="10" y="8" width="7" height="8" fill="#fff" opacity=".8"/><rect x="16" y="11" width="6.5" height="8" fill="#fff" opacity=".8"/><rect x="22" y="8" width="7" height="8" fill="#fff" opacity=".8"/><rect x="4" y="9" width="6.5" height="8" fill="#f2a00b"/><rect x="10" y="7" width="7" height="8" fill="#e8681a"/><rect x="12.5" y="8" width="2.2" height="6" fill="#f8f0b0"/><rect x="16" y="10" width="6.5" height="8" fill="#c84a08"/><rect x="22" y="7" width="7" height="8" fill="#f2a00b"/><text x="5" y="16" font-family="Liberation Sans" font-weight="bold" font-size="7.5" fill="#3a1a04">2</text><text x="17.3" y="17" font-family="Liberation Sans" font-weight="bold" font-size="7.5" fill="#3a1a04">1</text><text x="23.5" y="14" font-family="Liberation Sans" font-weight="bold" font-size="7.5" fill="#3a1a04">5</text></svg>
<div class="a" style="left:1159px;top:609px;width:32px;height:26px;border:1px solid #333;background:linear-gradient(160deg,#8fa4a2 0,#c8d4d2 35%,#f4f6f6 55%,#b4c4c2 80%,#8fa2a0 100%)"></div>
<svg class="a" style="left:1159px;top:609px" width="32" height="26" viewBox="0 0 32 26"><rect x="4" y="10" width="6.5" height="8" fill="#fff" opacity=".8"/><rect x="10" y="8" width="7" height="8" fill="#fff" opacity=".8"/><rect x="16" y="11" width="6.5" height="8" fill="#fff" opacity=".8"/><rect x="22" y="8" width="7" height="8" fill="#fff" opacity=".8"/><rect x="4" y="9" width="6.5" height="8" fill="#f2a00b"/><rect x="10" y="7" width="7" height="8" fill="#e8681a"/><rect x="12.5" y="8" width="2.2" height="6" fill="#f8f0b0"/><rect x="16" y="10" width="6.5" height="8" fill="#c84a08"/><rect x="22" y="7" width="7" height="8" fill="#f2a00b"/><text x="5" y="16" font-family="Liberation Sans" font-weight="bold" font-size="7.5" fill="#3a1a04">2</text><text x="17.3" y="17" font-family="Liberation Sans" font-weight="bold" font-size="7.5" fill="#3a1a04">1</text><text x="23.5" y="14" font-family="Liberation Sans" font-weight="bold" font-size="7.5" fill="#3a1a04">5</text></svg>
<svg class="a" style="left:1157px;top:541px" width="36" height="31" viewBox="0 0 36 31"><path d="M.8 7 V.8 H11 M25 .8 H35.2 V7 M35.2 23 V30.2 H25 M11 30.2 H.8 V23" stroke="#111" stroke-width="1.4" fill="none"/></svg>
<div class="t" style="left:1200px;top:550px;font-size:12.5px"><span class="c">图</span><span class="c">层</span> 2</div>
<div class="t" style="left:1200px;top:583px;font-size:12.5px"><span class="c">图</span><span class="c">层</span> 1</div>
<div class="t" style="left:1202px;top:616px;font-size:12.5px;transform:skewX(-14deg)"><span class="c">背</span><span class="c">景</span></div>
<svg class="a" style="left:1323px;top:615px" width="10" height="13" viewBox="0 0 10 13"><path d="M2 6 V4 A3 3 0 0 1 8 4 V6" stroke="#555" stroke-width="1.4" fill="none"/><rect x=".7" y="6" width="8.6" height="6.3" fill="#fff" stroke="#555" stroke-width="1.3"/><rect x="4.3" y="8" width="1.4" height="2.5" fill="#555"/></svg>
<!-- red box -->
<div class="a" style="left:1114px;top:532px;width:252px;height:108px;border:3px solid #ef3b3b"></div>
<!-- layers footer -->
<div class="a" style="left:1124px;top:708px;width:240px;height:1px;background:#9a9a9a"></div>
<div class="a" style="left:1124px;top:709px;width:240px;height:18px;background:#d6d6d6"></div>
<svg class="a" style="left:1162px;top:713px" width="15" height="9" viewBox="0 0 15 9"><rect x="1" y="1" width="7" height="7" rx="3.5" fill="none" stroke="#999" stroke-width="1.8"/><rect x="7" y="1" width="7" height="7" rx="3.5" fill="none" stroke="#999" stroke-width="1.8"/><path d="M5 4.5 H10" stroke="#999" stroke-width="1.8"/></svg>
<div class="t" style="left:1190px;top:711px;font-size:14px;font-style:italic;font-family:'Liberation Sans',sans-serif;color:#444;letter-spacing:-.5px">fx</div>
<svg class="a" style="left:1204px;top:722px" width="4" height="3"><path d="M0 0 H4 L2 3Z" fill="#444"/></svg>
<svg class="a" style="left:1217px;top:712px" width="13" height="12" viewBox="0 0 13 12"><rect x=".5" y=".5" width="12" height="11" fill="#777" stroke="#444"/><circle cx="6.5" cy="6" r="3.2" fill="#ddd"/></svg>
<svg class="a" style="left:1244px;top:713px" width="17" height="13" viewBox="0 0 17 13"><circle cx="5.5" cy="5.5" r="4.8" fill="#eee" stroke="#555" stroke-width="1.3"/><path d="M8.9 2.1 A4.8 4.8 0 0 1 2.1 8.9Z" fill="#666"/><path d="M13 11 H17 L15 13Z" fill="#444"/></svg>
<svg class="a" style="left:1270px;top:712px" width="14" height="12" viewBox="0 0 14 12"><path d="M.7 .7 H5 L6.5 2.5 H13.3 V11.3 H.7Z" fill="#ccc" stroke="#444" stroke-width="1.3"/></svg>
<svg class="a" style="left:1298px;top:713px" width="11" height="11" viewBox="0 0 11 11"><path d="M.7 .7 H10.3 V10.3 H5 L.7 6Z" fill="#d8d8d8" stroke="#555" stroke-width="1.3"/><path d="M.7 6 H5 V10.3" fill="#bbb" stroke="#555"/></svg>
<svg class="a" style="left:1324px;top:712px" width="13" height="13" viewBox="0 0 12 13"><path d="M3.5 3 V1.2 H8.5 V3" stroke="#444" stroke-width="1.3" fill="none"/><path d="M0 3.5 H12" stroke="#444" stroke-width="1.6"/><path d="M1.6 5 H10.4 L10 12.4 H2Z" fill="none" stroke="#444" stroke-width="1.3"/><path d="M4.3 6 V11.5 M6 6 V11.5 M7.7 6 V11.5" stroke="#444" stroke-width="1"/></svg>

<!-- ===== DIALOG ===== -->
<div class="a" style="left:21px;top:27px;width:570px;height:656px;border-radius:7px 7px 5px 5px;box-shadow:3px 4px 16px rgba(0,0,0,.7),inset 0 0 0 1px rgba(255,255,255,.55);border:1px solid #2a3440;background:linear-gradient(180deg,rgba(180,202,226,.8) 0,rgba(169,193,220,.78) 30px,rgba(164,188,216,.72) 100%);backdrop-filter:blur(2px)"></div>
<div class="a" style="left:22px;top:28px;width:568px;height:28px;border-radius:6px 6px 0 0;background:linear-gradient(90deg,rgba(255,255,255,.25),rgba(255,255,255,0) 40%,rgba(255,255,255,.15) 70%,rgba(255,255,255,0));"></div>
<!-- blurred blobs in title -->
<div class="a" style="left:22px;top:28px;width:568px;height:28px;overflow:hidden;border-radius:6px 6px 0 0">
<div class="a" style="left:80px;top:4px;width:50px;height:22px;background:#d0e2f4;opacity:.5;filter:blur(6px)"></div>
<div class="a" style="left:215px;top:4px;width:40px;height:22px;background:#d0e2f4;opacity:.4;filter:blur(6px)"></div>
<div class="a" style="left:320px;top:4px;width:40px;height:22px;background:#d0e2f4;opacity:.4;filter:blur(6px)"></div>
<div class="a" style="left:127px;top:11px;width:16px;height:12px;border-radius:40%;background:#4a5563;opacity:0.55;filter:blur(3.5px)"></div>
<div class="a" style="left:177px;top:11px;width:14px;height:12px;border-radius:40%;background:#6a7888;opacity:0.39;filter:blur(3.5px)"></div>
<div class="a" style="left:241px;top:11px;width:18px;height:12px;border-radius:40%;background:#56606e;opacity:0.5;filter:blur(3.5px)"></div>
<div class="a" style="left:296px;top:11px;width:18px;height:12px;border-radius:40%;background:#7a8898;opacity:0.33;filter:blur(3.5px)"></div>
<div class="a" style="left:346px;top:11px;width:14px;height:12px;border-radius:40%;background:#56606e;opacity:0.5;filter:blur(3.5px)"></div>
<div class="a" style="left:375px;top:11px;width:16px;height:12px;border-radius:40%;background:#4a5563;opacity:0.55;filter:blur(3.5px)"></div>
<div class="a" style="left:408px;top:11px;width:16px;height:12px;border-radius:40%;background:#4a5563;opacity:0.5;filter:blur(3.5px)"></div>
<div class="a" style="left:448px;top:11px;width:14px;height:12px;border-radius:40%;background:#56606e;opacity:0.5;filter:blur(3.5px)"></div>
<div class="a" style="left:487px;top:11px;width:18px;height:12px;border-radius:40%;background:#7a8898;opacity:0.33;filter:blur(3.5px)"></div>
</div>
<!-- Ps icon + title -->
<div class="a" style="left:30px;top:35px;width:15px;height:14px;background:#1c1d5a;border:1px solid #6b78b0"></div>
<div class="t" style="left:32px;top:38px;font-size:8px;color:#a6c0ff;font-weight:bold">Ps</div>
<div class="t" style="left:50px;top:35px;font-size:12px;color:#000"><span class="c">存</span><span class="c">储</span><span class="c">为</span></div>
<!-- close button -->
<div class="a" style="left:538px;top:28px;width:47px;height:19px;border:1px solid #5b2a26;border-top:none;border-radius:0 0 5px 5px;background:linear-gradient(180deg,#eeaaa0 0,#dc8e80 45%,#c8442e 52%,#c0442e 80%,#d47a68 100%);box-shadow:-1px 1px 0 rgba(255,255,255,.7),1px 1px 0 rgba(255,255,255,.7)"></div>
<svg class="a" style="left:556px;top:31px" width="13" height="12" viewBox="0 0 13 12"><path d="M2.8 2.5 L10.2 9.5 M10.2 2.5 L2.8 9.5" stroke="#3c4058" stroke-width="4.6" stroke-linecap="round"/><path d="M2.8 2.5 L10.2 9.5 M10.2 2.5 L2.8 9.5" stroke="#fff" stroke-width="2.6" stroke-linecap="square"/></svg>

<!-- client -->
<div class="a" style="left:28px;top:56px;width:557px;height:620px;background:#f0f0f0;border:1px solid #5f6f83"></div>

<!-- save in -->
<div class="t" style="left:62px;top:68px;font-size:12px"><span class="c">保</span><span class="c">存</span><span class="c">在</span> (<u>I</u>):</div>
<div class="a" style="left:128px;top:65px;width:260px;height:23px;background:#fff;border:1px solid #d4d8de;border-top-color:#a4a8ae;border-radius:2px"></div>
<svg class="a" style="left:134px;top:69px" width="16" height="17" viewBox="0 0 16 17"><defs><linearGradient id="pf" x1="0" y1="0" x2="1" y2="0"><stop offset="0" stop-color="#f8f0b0"/><stop offset=".5" stop-color="#f2d878"/><stop offset="1" stop-color="#e0b850"/></linearGradient></defs><path d="M1.5 1 L6.5 1 L6.5 15.5 L1.5 14.5Z" fill="url(#pf)" stroke="#d8b860" stroke-width=".6"/><path d="M6 1 L13 1.5 L13 7 L14 7.5 L14 15 L7 16 L6 15Z" fill="url(#pf)" stroke="#d0b058" stroke-width=".6"/><path d="M3 2.5 V6" stroke="#fff" stroke-width="1"/><rect x="11.7" y="9.5" width="1.2" height="4" fill="#2a90e0"/><rect x="11.7" y="8" width="1.2" height="1.5" fill="#fff"/></svg>
<div class="t" style="left:154px;top:71px;font-size:12px"><span class="c">图</span><span class="c">片</span></div>
<svg class="a" style="left:377px;top:75px" width="8" height="5"><path d="M0 0 H8 L4 5Z" fill="#000"/></svg>
<!-- toolbar icons -->
<svg class="a" style="left:404px;top:68px" width="17" height="17" viewBox="0 0 17 17"><defs><linearGradient id="gb" x1="0" y1="0" x2="0" y2="1"><stop offset="0" stop-color="#d8d8d8"/><stop offset=".25" stop-color="#707070"/><stop offset=".7" stop-color="#383838"/><stop offset="1" stop-color="#606060"/></linearGradient></defs><circle cx="8.5" cy="8.5" r="7.8" fill="url(#gb)" stroke="#6a6a6a" stroke-width=".7"/><circle cx="8.5" cy="8.5" r="6" fill="none" stroke="#888" stroke-width=".6" opacity=".6"/><path d="M4 8.5 H13 M4 8.5 L7.8 5 M4 8.5 L7.8 12" stroke="#fff" stroke-width="2.1" fill="none"/></svg>
<svg class="a" style="left:427px;top:67px" width="16" height="17" viewBox="0 0 16 17"><path d="M1 8 L1 16 L12 16 L13 7 L6 7 L5 5.5 L1.5 5.5Z" fill="#e8c860" stroke="#c8a030" stroke-width=".7"/><path d="M1 16 L3.5 10 L15 10 L12.5 16Z" fill="#fbe89a" stroke="#d0a838" stroke-width=".7"/><path d="M6.5 15.5 Q7.5 9 9.5 5.5 L7.5 5.5 L11.5 1 L14.8 5.5 L12.6 5.5 Q10.8 10 9.8 15Z" fill="#2aa02a" stroke="#1a7a1a" stroke-width=".5"/></svg>
<svg class="a" style="left:450px;top:69px" width="17" height="15" viewBox="0 0 17 15"><path d="M1 6 L1 13.5 L12 13.5 L12 5 L6 5 L5 3.5 L1.5 3.5Z" fill="#e8c860" stroke="#c8a030" stroke-width=".7"/><path d="M1 13.5 L3.5 8 L14.5 8 L12 13.5Z" fill="#fbe89a" stroke="#d0a838" stroke-width=".7"/><path d="M13.5 0.5 L14.3 2.6 L16.5 2 L15.2 3.9 L16.8 5.5 L14.6 5.6 L14.5 7.8 L13 6.2 L11.3 7.5 L11.7 5.3 L9.8 4.6 L11.8 3.6 L11.4 1.5 L12.9 2.5Z" fill="#ff4a1a"/><circle cx="13.5" cy="4.3" r="1.7" fill="#ffe860"/></svg>
<svg class="a" style="left:474px;top:69px" width="16" height="15" viewBox="0 0 16 15"><rect x=".5" y=".5" width="15" height="14" rx="1.5" fill="#fff" stroke="#2a6fd6"/><rect x=".5" y=".5" width="15" height="2.5" fill="#2a6fd6"/><rect x="3" y="5" width="2" height="2" fill="#9aa0d8"/><rect x="7" y="5" width="2" height="2" fill="#2a78e0"/><rect x="11" y="5" width="2" height="2" fill="#1a9a2a"/><rect x="3" y="9" width="2" height="2" fill="#ff6a3a"/><rect x="7" y="9" width="2" height="2" fill="#1a2a8a"/><rect x="11" y="9" width="2" height="2" fill="#d4a030"/></svg>
<svg class="a" style="left:492px;top:74px" width="8" height="5"><path d="M0 0 H8 L4 5Z" fill="#222"/></svg>

<!-- places bar -->
<div class="a" style="left:35px;top:89px;width:89px;height:360px;background:#f3f3f3"></div>
<!-- recent -->
<svg class="a" style="left:56px;top:92px" width="44" height="40" viewBox="0 0 44 40"><defs><radialGradient id="rc" cx=".4" cy=".4" r=".7"><stop offset="0" stop-color="#f4f7fa"/><stop offset="1" stop-color="#b8c4d0"/></radialGradient><linearGradient id="rt" x1="0" y1="0" x2="0" y2="1"><stop offset="0" stop-color="#f0f0f0"/><stop offset="1" stop-color="#a8a8a8"/></linearGradient></defs>
<circle cx="14.7" cy="12.5" r="7.6" fill="url(#rc)" stroke="#b0bcc8" stroke-width=".8"/><path d="M14.7 6 V12.5 H19" stroke="#8a98a8" stroke-width="1.2" fill="none"/>
<rect x="18.8" y="8" width="13" height="16" fill="#fafafa" stroke="#b8b8b8" stroke-width=".8"/><path d="M20.5 10.5 H30 M20.5 12.5 H28 M20.5 14.5 H24 M20.5 16.5 H24" stroke="#aaa" stroke-width=".7"/><rect x="25" y="13.5" width="5.5" height="4" fill="#3a8ad0"/><rect x="25" y="16" width="5.5" height="1.5" fill="#2a7a3a"/>
<path d="M8 27 L30 22.5 L36 24 L36 28.5 L14 34.5 L8 32Z" fill="url(#rt)" stroke="#9a9a9a" stroke-width=".6"/><path d="M8 27 L14 29.5 L36 24 M14 29.5 V34.5" stroke="#c8c8c8" stroke-width=".7" fill="none"/>
<path d="M13.6 18.8 L25.8 18.8 L25.8 28.8 L13.6 28.8Z" fill="#6ab8f0"/><path d="M13.6 24 Q18 21 25.8 26.5 V28.8 H13.6Z" fill="#3a8a3a"/><path d="M13.6 27 H25.8 V28.8 H13.6Z" fill="#2a6ac0"/>
</svg>
<div class="t" style="left:37px;top:130px;font-size:12px"><span class="c">最</span><span class="c">近</span><span class="c">访</span><span class="c">问</span><span class="c">的</span><span class="c">位</span><span class="c">置</span></div>
<!-- desktop -->
<div class="a" style="left:63px;top:161px;width:31px;height:24px;border:1px solid #b4bcc6;box-shadow:inset 0 0 0 1px #dfe4ea;background:linear-gradient(160deg,#2a5cc0 0,#3f7ddc 40%,#6aaaf2 100%)"></div>
<div class="a" style="left:65px;top:179px;width:27px;height:4px;background:linear-gradient(180deg,#2a3850,#4a5a70)"></div>
<div class="a" style="left:66px;top:179px;width:3px;height:3px;background:#f0a020"></div>
<div class="t" style="left:66px;top:192px;font-size:12px"><span class="c">桌</span><span class="c">面</span></div>
<!-- library -->
<svg class="a" style="left:58px;top:218px" width="42" height="36" viewBox="0 0 42 36"><defs><linearGradient id="lf" x1="0" y1="0" x2="1" y2="1"><stop offset="0" stop-color="#fdf2c0"/><stop offset="1" stop-color="#f0cf68"/></linearGradient><linearGradient id="la" x1="0" y1="0" x2="0" y2="1"><stop offset="0" stop-color="#d8f2ff"/><stop offset=".5" stop-color="#8acdf0"/><stop offset="1" stop-color="#4aa0d8"/></linearGradient></defs>
<rect x="7" y="4" width="15" height="6" rx="1" fill="#f4dc90" stroke="#c8a850" stroke-width=".8"/><rect x="9" y="5.2" width="3" height="2.4" fill="#10c020"/><rect x="12" y="5.2" width="6" height="2.4" fill="#fff"/>
<rect x="16" y="6.5" width="20" height="6" rx="1" fill="#f4dc90" stroke="#c8a850" stroke-width=".8"/><rect x="17.5" y="7.6" width="3" height="2.4" fill="#d83020"/><rect x="20.5" y="7.6" width="6" height="2.4" fill="#fff"/>
<rect x="23" y="9" width="14" height="5" rx="1" fill="#f4dc90" stroke="#c8a850" stroke-width=".8"/><rect x="25" y="9.8" width="3" height="2.4" fill="#1a90f0"/><rect x="28" y="9.8" width="5" height="2.4" fill="#fff"/>
<path d="M5.5 9.5 H22 L23 13.5 H36.5 V30.5 H5.5Z" fill="url(#lf)" stroke="#c8a850" stroke-width=".9"/>
<path d="M9 20.5 Q9 19.5 10 19.5 H32.5 Q33.5 19.5 33.5 20.5 V32 Q33.5 33 32.5 33 H27.5 Q26.5 33 26.5 32 V26 H16 V32 Q16 33 15 33 H10 Q9 33 9 32Z" fill="url(#la)" stroke="#3a90c8" stroke-width=".9"/>
<path d="M12 14 V22 M12 21 L16 16.5" stroke="#fff" stroke-width=".8" opacity=".8"/></svg>
<div class="t" style="left:72px;top:254px;font-size:12px"><span class="c">库</span></div>
<!-- computer -->
<svg class="a" style="left:56px;top:278px" width="44" height="40" viewBox="0 0 44 40"><defs><linearGradient id="tw" x1="0" y1="0" x2="1" y2="0"><stop offset="0" stop-color="#c8c8c8"/><stop offset=".5" stop-color="#f4f4f4"/><stop offset="1" stop-color="#b0b0b0"/></linearGradient><linearGradient id="sc" x1="0" y1="0" x2="1" y2="0"><stop offset="0" stop-color="#0a1aa8"/><stop offset=".55" stop-color="#0a28d8"/><stop offset=".6" stop-color="#90b0f8"/><stop offset="1" stop-color="#3858e8"/></linearGradient></defs>
<path d="M8 10 L15 8 L15 26 L8 27Z" fill="url(#tw)" stroke="#a0a0a0" stroke-width=".6"/><rect x="9" y="12" width="2" height="2.5" fill="#40d040"/>
<ellipse cx="27" cy="29.5" rx="8.5" ry="3.8" fill="#e4e4e4" stroke="#b8b8b8" stroke-width=".7"/>
<path d="M16 5 L38 8 L37 25 L14 21.5Z" fill="#f2eedc" stroke="#c4bca0" stroke-width=".7"/>
<path d="M17.5 7 L36.5 9.5 L35.5 23.5 L15.5 20Z" fill="url(#sc)"/></svg>
<div class="t" style="left:60px;top:316px;font-size:12px"><span class="c">计</span><span class="c">算</span><span class="c">机</span></div>
<!-- network -->
<svg class="a" style="left:56px;top:338px" width="44" height="40" viewBox="0 0 44 40"><defs><radialGradient id="gl" cx=".55" cy=".3" r=".75"><stop offset="0" stop-color="#80e8ff"/><stop offset=".5" stop-color="#2a90e0"/><stop offset="1" stop-color="#1040a0"/></radialGradient><linearGradient id="sc2" x1="0" y1="0" x2="1" y2="0"><stop offset="0" stop-color="#0a1aa8"/><stop offset=".55" stop-color="#0a28d8"/><stop offset=".6" stop-color="#90b0f8"/><stop offset="1" stop-color="#3858e8"/></linearGradient></defs>
<circle cx="19.6" cy="18" r="12.5" fill="url(#gl)"/><path d="M9 10 Q13 5 18 6 Q16 11 12 12 Q11 16 8 16Z M13 22 Q18 20 20 25 Q19 30 14 28Z M26 8 Q30 10 31 14 L28 13Z" fill="#30c040"/>
<ellipse cx="28" cy="33" rx="8" ry="3.5" fill="#e4e4e4" stroke="#b8b8b8" stroke-width=".7"/>
<path d="M18.5 12.5 L38.5 14.5 L37.5 30 L17.5 27.5Z" fill="#f0f0f0" stroke="#a8a8a8" stroke-width=".7"/>
<path d="M20 14.2 L37 16 L36 28.5 L19 26.2Z" fill="url(#sc2)"/></svg>
<div class="t" style="left:67px;top:379px;font-size:12px"><span class="c">网</span><span class="c">络</span></div>

<!-- file list -->
<div class="a" style="left:128px;top:93px;width:450px;height:282px;background:#fff"></div>
<div class="a" style="left:138px;top:119px;width:90px;height:73px;background:#fff;box-shadow:1px 1px 2px rgba(0,0,0,.35),0 0 1px rgba(0,0,0,.2)"></div>
<div class="t" style="left:164px;top:202px;font-size:12px;letter-spacing:.5px">11.png</div>

<!-- file name / format -->
<div class="t" style="left:130px;top:389px;font-size:12px"><span class="c">文</span><span class="c">件</span><span class="c">名</span>(<u>N</u>):</div>
<div class="a" style="left:224px;top:384px;width:246px;height:21px;background:#fff;border:1px solid #b9bec5"></div>
<div class="t" style="left:227px;top:389px;font-size:11px;font-family:'Liberation Mono',monospace;letter-spacing:-0.55px">8644ebf81a4c510f1557ae686859252dd42aa</div>
<svg class="a" style="left:457px;top:392px" width="8" height="5"><path d="M0 0 H8 L4 5Z" fill="#000"/></svg>
<div class="t" style="left:130px;top:415px;font-size:12px"><span class="c">格</span><span class="c">式</span>(<u>F</u>):</div>
<div class="a" style="left:224px;top:412px;width:246px;height:21px;border:1px solid #707070;border-radius:2px;background:linear-gradient(180deg,#f3f3f3 0,#ebebeb 50%,#dddddd 51%,#d2d2d2 100%)"></div>
<div class="t" style="left:227px;top:417px;font-size:11px;font-family:'Liberation Mono',monospace;letter-spacing:-0.55px">PNG (*.PNG;*.PNS)</div>
<svg class="a" style="left:457px;top:420px" width="8" height="5"><path d="M0 0 H8 L4 5Z" fill="#000"/></svg>
<!-- buttons -->
<div class="a" style="left:489px;top:385px;width:88px;height:21px;border:1px solid #3a8ac8;border-radius:3px;background:linear-gradient(180deg,#f2f2f2 0,#ebebeb 50%,#dddddd 51%,#cfcfcf 100%);box-shadow:inset 0 0 0 1px #5cc8f8"></div>
<div class="t" style="left:512px;top:389px;font-size:12px"><span class="c">保</span><span class="c">存</span>(<u>S</u>)</div>
<div class="a" style="left:489px;top:412px;width:88px;height:21px;border:1px solid #707070;border-radius:3px;background:linear-gradient(180deg,#f2f2f2 0,#ebebeb 50%,#dddddd 51%,#cfcfcf 100%)"></div>
<div class="t" style="left:521px;top:416px;font-size:12px"><span class="c">取</span><span class="c">消</span></div>

<!-- group box -->
<div class="a" style="left:91px;top:463px;width:446px;height:198px;border:1px solid #d5dfe5;border-radius:3px"></div>
<div class="t" style="left:98px;top:456px;font-size:12px;background:#f0f0f0;padding:0 2px"><span class="c">存</span><span class="c">储</span><span class="c">选</span><span class="c">项</span></div>
<div class="t" style="left:100px;top:474px;font-size:12px"><span class="c">存</span><span class="c">储</span>:</div>
<div class="t" style="left:100px;top:542px;font-size:12px"><span class="c">颜</span><span class="c">色</span>:</div>
<div class="a" style="left:100px;top:533px;width:413px;height:1px;background:#a0a0a0"></div>
<div class="a" style="left:100px;top:585px;width:413px;height:1px;background:#a0a0a0"></div>

<!-- checkboxes -->
<style>
.cb{position:absolute;width:13px;height:13px;border:1px solid #b4b4b4;background:linear-gradient(135deg,#e8e8e8,#fafafa)}
.cbe{position:absolute;width:13px;height:13px;border:1px solid #8e8f8f;background:linear-gradient(135deg,#dcdcdc,#fcfcfc)}
.g{color:#6d6d6d}
</style>
<div class="cb" style="left:207px;top:475px"></div>
<svg class="a" style="left:209px;top:477px" width="9" height="9" viewBox="0 0 9 9"><path d="M1 4.5 L3.5 7.5 L8 1" stroke="#9a9a9a" stroke-width="1.6" fill="none"/></svg>
<div class="t g" style="left:223px;top:475px;font-size:12px"><span class="c">作</span><span class="c">为</span><span class="c">副</span><span class="c">本</span>(<u>Y</u>)</div>
<div class="cb" style="left:350px;top:475px"></div>
<div class="t g" style="left:365px;top:475px;font-size:12px"><span class="c">注</span><span class="c">释</span>(<u>N</u>)</div>
<div class="cb" style="left:207px;top:495px"></div>
<div class="t g" style="left:223px;top:495px;font-size:12px">Alpha <span class="c">通</span><span class="c">道</span>(<u>E</u>)</div>
<div class="cb" style="left:350px;top:495px"></div>
<div class="t g" style="left:365px;top:495px;font-size:12px"><span class="c">专</span><span class="c">色</span>(<u>P</u>)</div>
<svg class="a" style="left:186px;top:511px" width="18" height="17" viewBox="0 0 18 17"><path d="M9 1 L17 16 H1 Z" fill="#ffe500" stroke="#000" stroke-width="1.3" stroke-linejoin="round"/><rect x="8.1" y="5.5" width="1.8" height="6" fill="#000"/><rect x="8.1" y="12.6" width="1.8" height="1.8" fill="#000"/></svg>
<div class="cb" style="left:207px;top:514px"></div>
<div class="t g" style="left:222px;top:514px;font-size:12px"><span class="c">图</span><span class="c">层</span>(<u>L</u>)</div>

<div class="cb" style="left:207px;top:543px"></div>
<div class="t g" style="left:223px;top:544px;font-size:12px"><span class="c">使</span><span class="c">用</span><span class="c">校</span><span class="c">样</span><span class="c">设</span><span class="c">置</span>(<u>O</u>): &nbsp;<span class="c">工</span><span class="c">作</span><span class="c">中</span><span class="c">的</span> CMYK</div>
<div class="cb" style="left:207px;top:562px"></div>
<div class="t g" style="left:223px;top:563px;font-size:12px">ICC <span class="c">配</span><span class="c">置</span><span class="c">文</span><span class="c">件</span>(<u>C</u>): &nbsp;Adobe RGB (1998)</div>

<div class="cb" style="left:100px;top:599px"></div>
<div class="t g" style="left:115px;top:599px;font-size:12px"><span class="c">缩</span><span class="c">览</span><span class="c">图</span>(<u>T</u>)</div>
<div class="cbe" style="left:283px;top:598px"></div>
<svg class="a" style="left:285px;top:600px" width="9" height="9" viewBox="0 0 9 9"><path d="M1 4.5 L3.5 7.5 L8 1" stroke="#2a3a8a" stroke-width="1.7" fill="none"/></svg>
<div class="t" style="left:299px;top:599px;font-size:12px"><span class="c">使</span><span class="c">用</span><span class="c">小</span><span class="c">写</span><span class="c">扩</span><span class="c">展</span><span class="c">名</span>(<u>U</u>)</div>

<!-- message box -->
<div class="a" style="left:100px;top:623px;width:413px;height:30px;background:#fff;border-top:1px solid #a0a0a0;border-left:1px solid #a0a0a0"></div>
<svg class="a" style="left:105px;top:628px" width="18" height="17" viewBox="0 0 18 17"><path d="M9 1 L17 16 H1 Z" fill="#ffe500" stroke="#000" stroke-width="1.3" stroke-linejoin="round"/><rect x="8.1" y="5.5" width="1.8" height="6" fill="#000"/><rect x="8.1" y="12.6" width="1.8" height="1.8" fill="#000"/></svg>
<div class="t" style="left:131px;top:631px;font-size:12px"><span class="c">在</span><span class="c">此</span><span class="c">选</span><span class="c">项</span><span class="c">下</span><span class="c">，</span><span class="c">文</span><span class="c">件</span><span class="c">必</span><span class="c">须</span><span class="c">存</span><span class="c">储</span><span class="c">为</span><span class="c">拷</span><span class="c">贝</span><span class="c">。</span></div>
<!-- resize grip -->
<svg class="a" style="left:572px;top:664px" width="11" height="11" viewBox="0 0 11 11"><g fill="#b8b8b8"><rect x="8" y="1" width="1.5" height="1.5"/><rect x="8" y="5" width="1.5" height="1.5"/><rect x="8" y="9" width="1.5" height="1.5"/><rect x="4" y="5" width="1.5" height="1.5"/><rect x="4" y="9" width="1.5" height="1.5"/><rect x="0" y="9" width="1.5" height="1.5"/></g></svg>

</body></html>
